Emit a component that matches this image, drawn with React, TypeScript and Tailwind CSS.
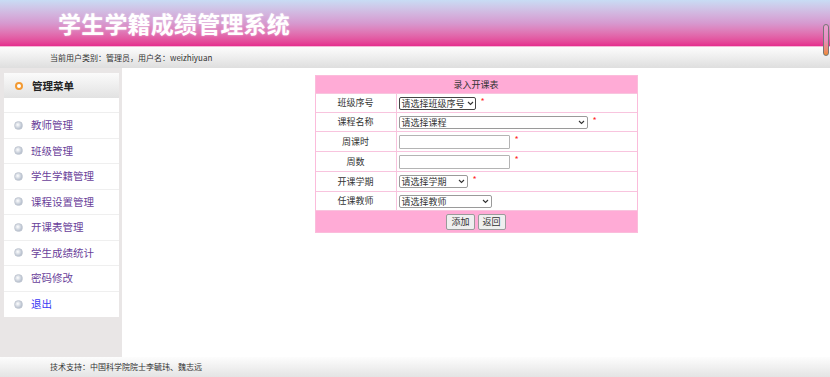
import React from "react";

const menu = [
  "教师管理",
  "班级管理",
  "学生学籍管理",
  "课程设置管理",
  "开课表管理",
  "学生成绩统计",
  "密码修改",
];

function Chevron() {
  return (
    <svg width="7" height="5" viewBox="0 0 7 5" className="shrink-0">
      <polyline points="1,1 3.5,3.5 6,1" fill="none" stroke="#333" strokeWidth="1.1" />
    </svg>
  );
}

function FakeSelect({ label, width, dark }: { label: string; width: number; dark?: boolean }) {
  return (
    <div
      className={
        "h-[13px] flex items-center justify-between gap-[2px] pl-[2px] pr-[2px] rounded-[2px] bg-white border whitespace-nowrap overflow-hidden " +
        (dark ? "border-[#444]" : "border-[#9a9a9a]")
      }
      style={{ width }}
    >
      <span className="leading-none">{label}</span>
      <Chevron />
    </div>
  );
}

function Star() {
  return <span className="text-[#ff2a2a] text-[9px] leading-none relative -top-[2px] ml-[5px]">*</span>;
}

type Row = { label: string; h: number; field: React.ReactNode; star?: boolean };

export default function App() {
  const rows: Row[] = [
    { label: "班级序号", h: 19, field: <FakeSelect label="请选择班级序号" width={77} dark />, star: true },
    { label: "课程名称", h: 19, field: <FakeSelect label="请选择课程" width={189} />, star: true },
    { label: "周课时", h: 20, field: <div className="h-[14px] w-[111px] border border-[#b4b4b4] rounded-[1px] bg-white" />, star: true },
    { label: "周数", h: 20, field: <div className="h-[14px] w-[111px] border border-[#b4b4b4] rounded-[1px] bg-white" />, star: true },
    { label: "开课学期", h: 20, field: <FakeSelect label="请选择学期" width={69} />, star: true },
    { label: "任课教师", h: 19, field: <FakeSelect label="请选择教师" width={93} /> },
  ];

  return (
    <div className="relative w-[830px] h-[377px] overflow-hidden bg-white text-[#333] font-['Noto_Sans_CJK_SC','Noto_Sans',sans-serif]">
      {/* header */}
      <header className="h-[46px] bg-gradient-to-b from-[#c8dcf4] via-[#d69ad0] to-[#e52c8e] flex items-center pl-[58px]">
        <h1 className="text-[23px] font-bold text-white leading-none tracking-[0.2px] [text-shadow:0_0_2px_rgba(255,255,255,0.5)]">
          学生学籍成绩管理系统
        </h1>
      </header>
      <div className="h-px bg-[#f4b8d6]" />
      <div className="h-[21px] bg-gradient-to-b from-[#fdfdfd] to-[#dedede] flex items-center pl-[50px] text-[8px] text-[#333]">
        当前用户类别：管理员，用户名：weizhiyuan
      </div>

      {/* body */}
      <div className="flex h-[289px]">
        <aside className="w-[122px] bg-[#e9e6e6] pt-[5px] pl-[4px] pr-[3px]">
          <div className="bg-white">
            <div className="h-[25px] bg-gradient-to-b from-[#fbfbfb] to-[#e2e2e2] flex items-center pl-[11px] gap-[9px]">
              <span className="w-[8px] h-[8px] rounded-full border-[2px] border-[#f39a32] bg-white" />
              <span className="text-[10.5px] font-bold text-[#222]">管理菜单</span>
            </div>
            <div className="h-[15px] border-b border-[#eeeeee]" />
            {menu.map((m) => (
              <div key={m} className="h-[25.5px] border-b border-[#efefef] flex items-center pl-[10px] gap-[8px]">
                <span className="w-[9px] h-[9px] rounded-full border border-[#c3c9d3] bg-[radial-gradient(circle_at_40%_40%,#ffffff,#9aa7bb)]" />
                <span className="text-[10.5px] text-[#6a3f9a]">{m}</span>
              </div>
            ))}
            <div className="h-[25.5px] flex items-center pl-[10px] gap-[8px]">
              <span className="w-[9px] h-[9px] rounded-full border border-[#c3c9d3] bg-[radial-gradient(circle_at_40%_40%,#ffffff,#9aa7bb)]" />
              <span className="text-[10.5px] text-[#3a3af2]">退出</span>
            </div>
          </div>
        </aside>

        <main className="flex-1 flex justify-center pt-[7px]">
          <div className="w-[323px] h-fit border border-[#fbbcdb] text-[9px]">
            <div className="h-[18px] bg-[#ffabd6] flex items-center justify-center border-b border-[#f8c4de]">
              录入开课表
            </div>
            {rows.map((r) => (
              <div key={r.label} className="flex border-b border-[#f8c4de]" style={{ height: r.h }}>
                <div className="w-[81px] flex items-center justify-center border-r border-[#f8c4de]">{r.label}</div>
                <div className="flex-1 flex items-center pl-[2px]">
                  {r.field}
                  {r.star ? <Star /> : null}
                </div>
              </div>
            ))}
            <div className="h-[21px] bg-[#ffabd6] flex items-center justify-center gap-[3px]">
              <button className="h-[16px] px-[4px] bg-[#efefef] border border-[#9a9a9a] rounded-[2px] text-[9px] leading-none">添加</button>
              <button className="h-[16px] px-[4px] bg-[#efefef] border border-[#9a9a9a] rounded-[2px] text-[9px] leading-none">返回</button>
            </div>
          </div>
        </main>
      </div>

      {/* footer */}
      <footer className="h-[20px] bg-gradient-to-b from-[#fdfdfd] to-[#e4e4e4] flex items-center pl-[50px] text-[8px] text-[#333]">
        技术支持：中国科学院院士李毓玮、魏志远
      </footer>

      {/* scroll thumb overlay */}
      <div className="absolute left-[823px] top-[24px] w-[6px] h-[32px] rounded-[3px] border border-[#777] bg-gradient-to-b from-[#e9a0d0] via-[#e88cc0] to-[#f08a2a]" />
    </div>
  );
}
